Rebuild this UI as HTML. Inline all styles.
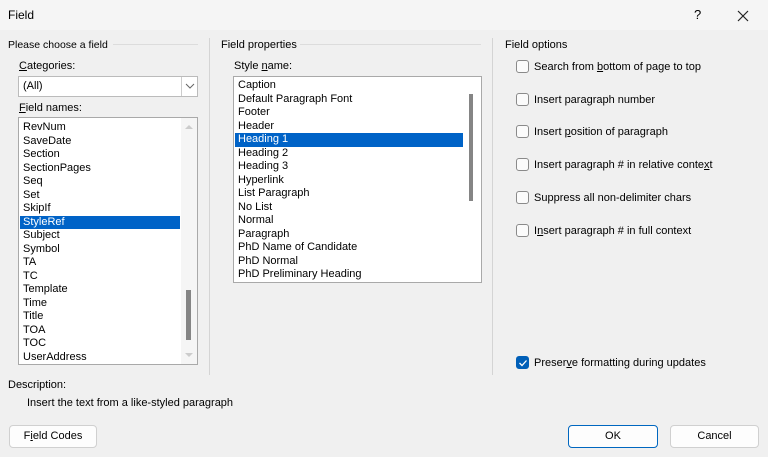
<!DOCTYPE html>
<html><head><meta charset="utf-8"><style>
*{margin:0;padding:0;box-sizing:border-box}
body{width:768px;height:457px;background:#f0f0f0;font-family:"Liberation Sans",sans-serif;font-size:11px;color:#000;position:relative;overflow:hidden}
.a{position:absolute;white-space:nowrap;line-height:13px}
.tb{position:absolute;left:0;top:0;width:768px;height:30px;background:#f5f5f5}
.vl{position:absolute;width:1px;background:#d4d4d4}
.hl{position:absolute;height:1px;background:#dcdcdc}
.box{position:absolute;background:#fff;border:1px solid #a9a9a9;overflow:hidden}
.it{position:absolute;left:4px;line-height:13.5px;height:13.5px;white-space:nowrap}
.sel{background:#0063c7;color:#fff;left:1px;padding-left:3px}
.cb{position:absolute;left:516px;width:13px;height:13px;border:1px solid #8a8a8a;border-radius:3px;background:#fbfbfb}
.btn{position:absolute;top:425px;height:23px;background:#fdfdfd;border:1px solid #d0d0d0;border-radius:4px;text-align:center;line-height:21px}
u{text-decoration:underline}
</style></head><body>
<div class="tb"></div>
<div class="a" style="left:8px;top:9px;font-size:12px">Field</div>
<div class="a" style="left:694px;top:8px;font-size:13px">?</div>
<svg class="a" style="left:737px;top:10px" width="12" height="12"><path d="M1 1L11 11M11 1L1 11" stroke="#222" stroke-width="1.2"/></svg>

<div class="vl" style="left:209px;top:38px;height:337px"></div>
<div class="vl" style="left:492px;top:38px;height:337px"></div>

<div class="a" style="left:8px;top:39px;font-size:10.5px">Please choose a field</div>
<div class="hl" style="left:113px;top:44px;width:85px"></div>
<div class="a" style="left:19px;top:60px"><u>C</u>ategories:</div>
<div class="box" style="left:18px;top:76px;width:180px;height:21px;border-color:#bbb"><div class="it" style="top:3px;left:4px">(All)</div>
<div style="position:absolute;left:162px;top:0;width:1px;height:19px;background:#ccc"></div>
<svg style="position:absolute;left:166px;top:6px" width="10" height="7"><path d="M1 1L5 5L9 1" stroke="#666" fill="none"/></svg></div>
<div class="a" style="left:19px;top:102px"><u>F</u>ield names:</div>
<div class="box" style="left:18px;top:117px;width:180px;height:248px">
<div class="it" style="top:3px">RevNum</div><div class="it" style="top:16.5px">SaveDate</div><div class="it" style="top:30px">Section</div><div class="it" style="top:43.5px">SectionPages</div><div class="it" style="top:57px">Seq</div><div class="it" style="top:70.5px">Set</div><div class="it" style="top:84px">SkipIf</div><div class="it sel" style="top:97.5px;width:160px">StyleRef</div><div class="it" style="top:111px">Subject</div><div class="it" style="top:124.5px">Symbol</div><div class="it" style="top:138px">TA</div><div class="it" style="top:151.5px">TC</div><div class="it" style="top:165px">Template</div><div class="it" style="top:178.5px">Time</div><div class="it" style="top:192px">Title</div><div class="it" style="top:205.5px">TOA</div><div class="it" style="top:219px">TOC</div><div class="it" style="top:232.5px">UserAddress</div>
<div style="position:absolute;left:162px;top:0;width:16px;height:246px;background:#f5f5f5"></div>
<svg style="position:absolute;left:165px;top:5px" width="10" height="240"><path d="M1 6L5 2L9 6Z" fill="#ccc"/><path d="M1 230L5 234L9 230Z" fill="#ccc"/></svg>
<div style="position:absolute;left:167px;top:172px;width:5px;height:50px;background:#858585"></div>
</div>

<div class="a" style="left:221px;top:39px">Field properties</div>
<div class="hl" style="left:300px;top:44px;width:181px"></div>
<div class="a" style="left:234px;top:60px">Style <u>n</u>ame:</div>
<div class="box" style="left:233px;top:76px;width:249px;height:207px">
<div class="it" style="top:2px">Caption</div><div class="it" style="top:15.5px">Default Paragraph Font</div><div class="it" style="top:29px">Footer</div><div class="it" style="top:42.5px">Header</div><div class="it sel" style="top:56px;width:228px">Heading 1</div><div class="it" style="top:69.5px">Heading 2</div><div class="it" style="top:83px">Heading 3</div><div class="it" style="top:96.5px">Hyperlink</div><div class="it" style="top:110px">List Paragraph</div><div class="it" style="top:123.5px">No List</div><div class="it" style="top:137px">Normal</div><div class="it" style="top:150.5px">Paragraph</div><div class="it" style="top:164px">PhD Name of Candidate</div><div class="it" style="top:177.5px">PhD Normal</div><div class="it" style="top:191px">PhD Preliminary Heading</div>
<div style="position:absolute;left:230px;top:0;width:17px;height:205px;background:#fff"></div>
<div style="position:absolute;left:235px;top:17px;width:4px;height:107px;background:#858585"></div>
</div>

<div class="a" style="left:505px;top:39px">Field options</div>
<div class="cb" style="top:60px"></div><div class="a" style="left:534px;top:61px">Search from <u>b</u>ottom of page to top</div>
<div class="cb" style="top:93px"></div><div class="a" style="left:534px;top:94px">Insert paragraph number</div>
<div class="cb" style="top:125px"></div><div class="a" style="left:534px;top:126px">Insert <u>p</u>osition of paragraph</div>
<div class="cb" style="top:158px"></div><div class="a" style="left:534px;top:159px">Insert paragraph # in relative conte<u>x</u>t</div>
<div class="cb" style="top:191px"></div><div class="a" style="left:534px;top:192px">Suppress all non-delimiter chars</div>
<div class="cb" style="top:224px"></div><div class="a" style="left:534px;top:225px">I<u>n</u>sert paragraph # in full context</div>
<div class="cb" style="top:356px;background:#005fb8;border-color:#005fb8"><svg style="position:absolute;left:1px;top:1px" width="10" height="10"><path d="M1.5 5L4 7.5L8.5 2.5" stroke="#fff" stroke-width="1.3" fill="none"/></svg></div>
<div class="a" style="left:534px;top:357px">Preser<u>v</u>e formatting during updates</div>

<div class="a" style="left:8px;top:379px">Description:</div>
<div class="a" style="left:27px;top:397px">Insert the text from a like-styled paragraph</div>

<div class="btn" style="left:9px;width:88px">F<u>i</u>eld Codes</div>
<div class="btn" style="left:568px;width:90px;border-color:#0067c0">OK</div>
<div class="btn" style="left:670px;width:89px">Cancel</div>
</body></html>
